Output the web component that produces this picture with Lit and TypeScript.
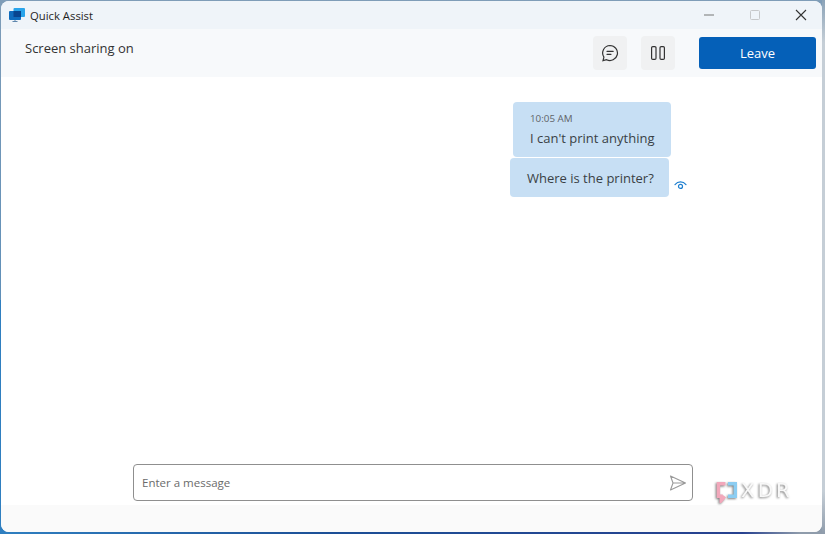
import { LitElement, html, css } from 'lit';
import { customElement } from 'lit/decorators.js';

@customElement('app-root')
export class AppRoot extends LitElement {
  static styles = css`
    :host {
      display: block;
      width: 825px;
      height: 534px;
      box-sizing: border-box;
      padding: 1px 3px 2px 1px;
      background: linear-gradient(90deg, #2f7fc0 0%, #1c4f96 40%, #27418f 90%, #8f9cab 97%);
      font-family: 'Open Sans', 'Noto Sans', sans-serif;
      color: #2b2b2b;
      overflow: hidden;
      position: relative;
    }
    .top-edge {
      position: absolute;
      inset: 0 0 auto 0;
      height: 300px;
      background: linear-gradient(180deg, #7f9db8, #5f8fb8);
    }
    .right-edge {
      position: absolute;
      top: 0;
      right: 0;
      bottom: 0;
      width: 3px;
      background: linear-gradient(180deg, #8ba3b8, #c5ced6 8%, #c5ced6 92%, #8f9cab);
    }
    .window {
      position: relative;
      height: 100%;
      display: flex;
      flex-direction: column;
      background: #ffffff;
      border-radius: 8px;
      overflow: hidden;
    }
    .titlebar {
      height: 28px;
      flex: none;
      display: flex;
      align-items: center;
      background: #eff4f9;
      padding-left: 8px;
    }
    .app-title {
      font-size: 11.3px;
      margin-left: 5px;
      color: #1f1f1f;
    }
    .win-controls {
      margin-left: auto;
      margin-right: -2px;
      display: flex;
      align-items: center;
    }
    .win-btn {
      width: 46px;
      height: 28px;
      display: flex;
      align-items: center;
      justify-content: center;
    }
    .toolbar {
      height: 48px;
      flex: none;
      display: flex;
      align-items: flex-start;
      background: #f7f9fb;
      box-sizing: border-box;
      padding: 6px 6px 0 24px;
    }
    .status {
      font-size: 13px;
      line-height: 26px;
      color: #333;
    }
    .actions {
      margin-left: auto;
      margin-top: 1px;
      display: flex;
      align-items: center;
      gap: 14px;
    }
    .icon-btn {
      width: 34px;
      height: 34px;
      border-radius: 4px;
      background: #f0f1f2;
      display: flex;
      align-items: center;
      justify-content: center;
    }
    .leave {
      width: 117px;
      height: 32px;
      margin-left: 10px;
      border-radius: 3px;
      background: #0560b8;
      color: #fff;
      font-size: 13px;
      display: flex;
      align-items: center;
      justify-content: center;
    }
    .chat {
      flex: 1;
      display: flex;
      flex-direction: column;
      align-items: flex-start;
      padding: 25px 0 0 509px;
      gap: 1px;
    }
    .bubble {
      background: #c7dff4;
      border-radius: 4px;
      box-sizing: border-box;
      font-size: 13px;
      color: #3a3f45;
    }
    .received {
      width: 158px;
      height: 55px;
      margin-left: 3px;
      padding: 10px 0 0 17px;
    }
    .time {
      font-size: 9.8px;
      line-height: 14px;
      color: #5f6368;
    }
    .line {
      line-height: 24px;
    }
    .sent-row {
      display: flex;
      align-items: flex-end;
    }
    .sent {
      width: 159px;
      height: 39px;
      padding-left: 17px;
      display: flex;
      align-items: center;
    }
    .seen {
      margin: 0 0 7px 5px;
      display: block;
    }
    .composer-row {
      flex: none;
      height: 41px;
      display: flex;
      align-items: flex-start;
      padding-left: 132px;
    }
    .composer {
      width: 560px;
      height: 37px;
      box-sizing: border-box;
      border: 1px solid #8f8f8f;
      border-radius: 4px;
      display: flex;
      align-items: center;
      padding: 0 5px 0 8px;
      background: #fff;
    }
    .placeholder {
      font-size: 11.5px;
      color: #6b6b6b;
      margin-top: -1px;
    }
    .send {
      margin-left: auto;
      display: block;
    }
    .footer {
      flex: none;
      height: 27px;
      background: #fafafa;
    }
    .watermark {
      position: absolute;
      left: 714px;
      top: 477px;
      display: flex;
      align-items: center;
      height: 26px;
      filter: drop-shadow(-1px 1px 1px #7d7d7d);
    }
    .xdr {
      font-family: 'DejaVu Sans', sans-serif;
      font-size: 20px;
      letter-spacing: 3px;
      color: #f8f8f8;
      margin-left: 4px;
    }
  `;

  render() {
    return html`
      <div class="top-edge"></div>
      <div class="right-edge"></div>
      <div class="window">
        <div class="titlebar">
          <svg width="16" height="14" viewBox="0 0 16 14">
            <rect x="4.5" y="0" width="11.5" height="9" rx="1" fill="#29a4ea" />
            <rect x="0" y="3" width="12" height="9" rx="1" fill="#0f6cbd" />
            <rect x="4.5" y="3" width="7.5" height="6" fill="#08458f" />
            <rect x="3.5" y="13" width="5" height="1" fill="#5d86ad" />
            <rect x="5.5" y="12" width="1" height="1" fill="#5d86ad" />
          </svg>
          <span class="app-title">Quick Assist</span>
          <div class="win-controls">
            <div class="win-btn">
              <svg width="12" height="12" viewBox="0 0 12 12"><path d="M1 6h10" stroke="#777" stroke-width="1.2" /></svg>
            </div>
            <div class="win-btn">
              <svg width="12" height="12" viewBox="0 0 12 12"><rect x="1.5" y="1.5" width="9" height="9" rx="1" fill="none" stroke="#c6c8ca" /></svg>
            </div>
            <div class="win-btn">
              <svg width="12" height="12" viewBox="0 0 12 12"><path d="M1 1l10 10M11 1L1 11" stroke="#333" stroke-width="1.1" /></svg>
            </div>
          </div>
        </div>
        <div class="toolbar">
          <span class="status">Screen sharing on</span>
          <div class="actions">
            <div class="icon-btn">
              <svg width="18" height="18" viewBox="0 0 18 18" fill="none" stroke="#333" stroke-width="1.2">
                <path d="M9 1.5a7.5 7.5 0 1 1-3.4 14.2L2 16.6l.9-3.5A7.5 7.5 0 0 1 9 1.5z" />
                <path d="M6 7.3h6.2M6 10.3h4" stroke-linecap="round" />
              </svg>
            </div>
            <div class="icon-btn">
              <svg width="16" height="16" viewBox="0 0 16 16" fill="none" stroke="#333" stroke-width="1.2">
                <rect x="1.6" y="1.6" width="4.4" height="12.8" rx="1.2" />
                <rect x="10" y="1.6" width="4.4" height="12.8" rx="1.2" />
              </svg>
            </div>
            <div class="leave">Leave</div>
          </div>
        </div>
        <div class="chat">
          <div class="bubble received">
            <div class="time">10:05 AM</div>
            <div class="line">I can't print anything</div>
          </div>
          <div class="sent-row">
            <div class="bubble sent">Where is the printer?</div>
            <svg class="seen" width="13" height="10" viewBox="0 0 13 10" fill="none" stroke="#1d7fd0" stroke-width="1.2">
              <path d="M1 4.6C4 1 9 1 12 4.6" stroke-linecap="round" />
              <circle cx="6.5" cy="6.4" r="2" />
            </svg>
          </div>
        </div>
        <div class="composer-row">
          <div class="composer">
            <span class="placeholder">Enter a message</span>
            <svg class="send" width="18" height="16" viewBox="0 0 18 16" fill="none" stroke="#9a9a9a" stroke-width="1.1">
              <path d="M1.5 1l15 7-15 7 2.5-7zM4 8h12.5" stroke-linejoin="round" />
            </svg>
          </div>
        </div>
        <div class="footer"></div>
      </div>
      <div class="watermark">
        <svg width="23" height="26" viewBox="0 0 23 26" fill="none" stroke-width="3.4">
          <path d="M11.5 6.7H4.4v12.6h2.8v4.2l3.6-4.2" stroke="#f2a8bb" />
          <path d="M14 6.7h7.3v12.6H14" stroke="#8ccdf2" />
        </svg>
        <span class="xdr">XDR</span>
      </div>
    `;
  }
}
